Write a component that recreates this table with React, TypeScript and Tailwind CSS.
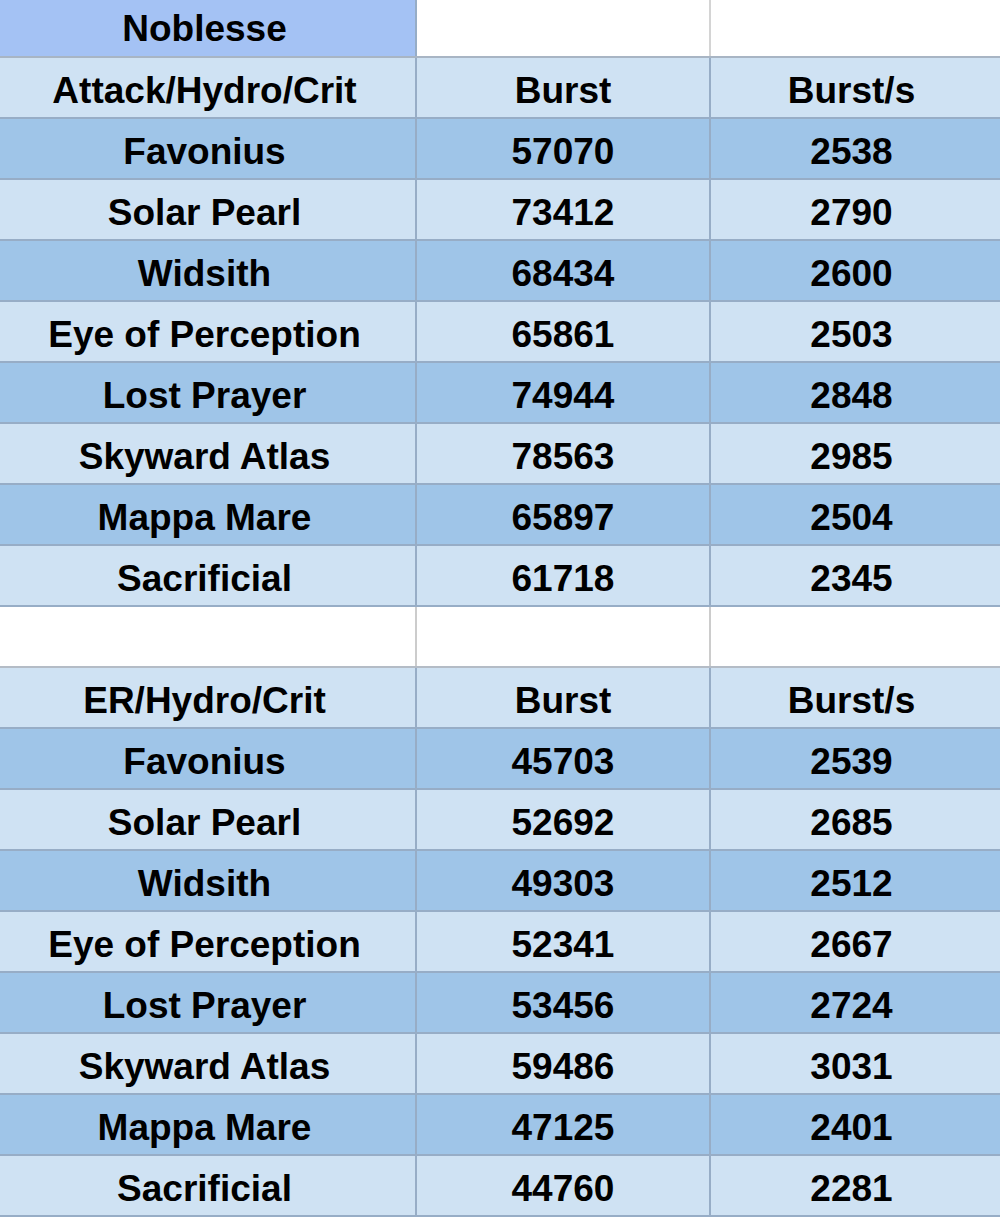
const attack = [
  ['Favonius', '57070', '2538'],
  ['Solar Pearl', '73412', '2790'],
  ['Widsith', '68434', '2600'],
  ['Eye of Perception', '65861', '2503'],
  ['Lost Prayer', '74944', '2848'],
  ['Skyward Atlas', '78563', '2985'],
  ['Mappa Mare', '65897', '2504'],
  ['Sacrificial', '61718', '2345'],
];

const er = [
  ['Favonius', '45703', '2539'],
  ['Solar Pearl', '52692', '2685'],
  ['Widsith', '49303', '2512'],
  ['Eye of Perception', '52341', '2667'],
  ['Lost Prayer', '53456', '2724'],
  ['Skyward Atlas', '59486', '3031'],
  ['Mappa Mare', '47125', '2401'],
  ['Sacrificial', '44760', '2281'],
];

function Row({ cells, dark }: { cells: string[]; dark: boolean }) {
  const bg = dark ? 'bg-[#9fc5e8]' : 'bg-[#cfe2f3]';
  return (
    <div className={`flex h-[61px] border-b-2 border-[#97adc6] ${bg}`}>
      <div className="w-[417px] flex items-center justify-center pt-[6px] pr-[6px] border-r-2 border-[#97adc6]">{cells[0]}</div>
      <div className="w-[294px] flex items-center justify-center pt-[6px] border-r-2 border-[#97adc6]">{cells[1]}</div>
      <div className="flex-1 flex items-center justify-center pt-[6px] pr-[8px]">{cells[2]}</div>
    </div>
  );
}

function Block({ title, rows }: { title: string; rows: string[][] }) {
  return (
    <>
      <Row cells={[title, 'Burst', 'Burst/s']} dark={false} />
      {rows.map((r, i) => (
        <Row key={i} cells={r} dark={i % 2 === 0} />
      ))}
    </>
  );
}

export default function App() {
  return (
    <div className="w-[1000px] h-[1219px] overflow-hidden bg-white text-black font-bold text-[37px] leading-none font-['Liberation_Sans',Arial,sans-serif]">
      <div className="flex h-[58px] border-b-2 border-[#a8b5c4]">
        <div className="w-[417px] flex items-center justify-center pr-[6px] bg-[#a4c2f4] border-r-2 border-[#97adc6]">Noblesse</div>
        <div className="w-[294px] border-r-2 border-[#d4d4d4]"></div>
        <div className="flex-1"></div>
      </div>
      <Block title="Attack/Hydro/Crit" rows={attack} />
      <div className="flex h-[61px] border-b-2 border-[#b4bcc6]">
        <div className="w-[415px]"></div>
        <div className="w-[296px] border-x-2 border-[#cccccc]"></div>
        <div className="flex-1"></div>
      </div>
      <Block title="ER/Hydro/Crit" rows={er} />
    </div>
  );
}
